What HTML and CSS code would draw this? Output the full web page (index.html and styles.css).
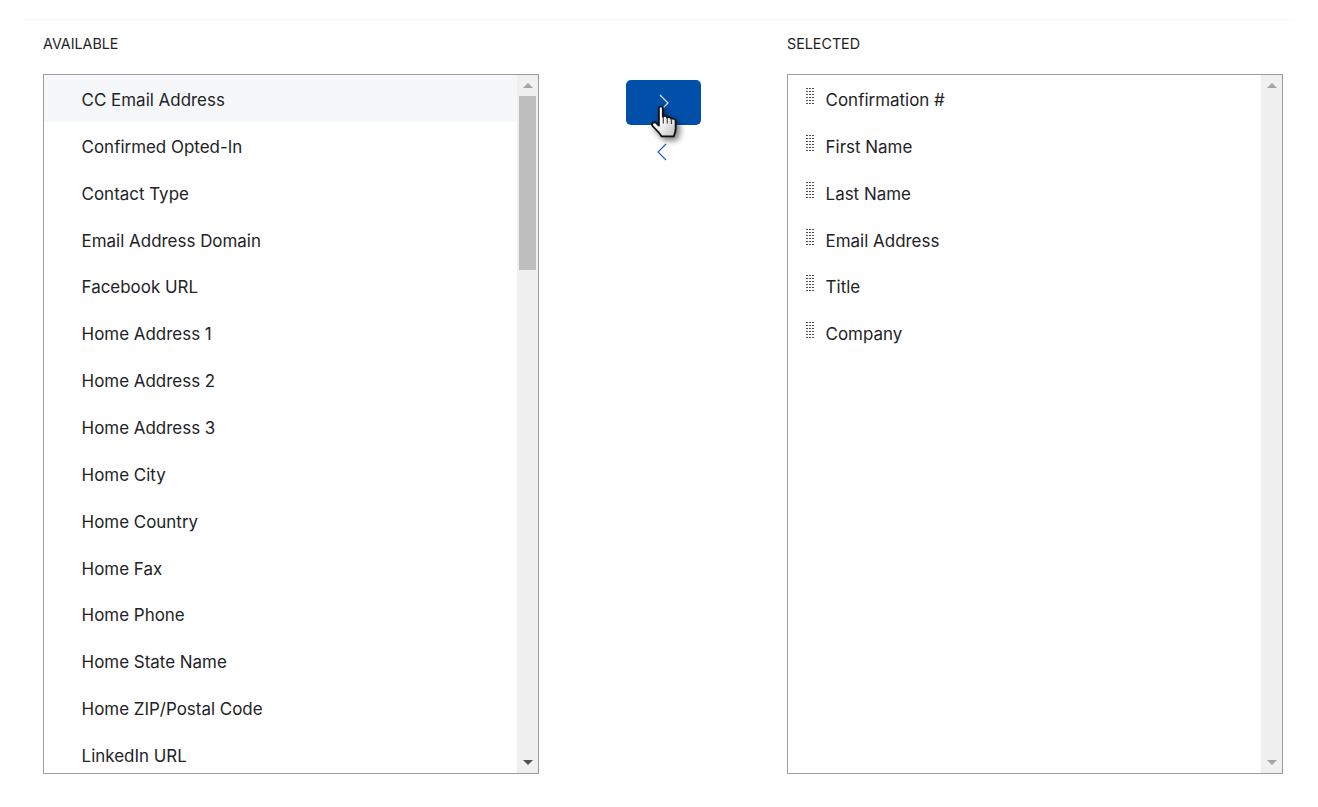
FILE: index.html
```html
<!DOCTYPE html>
<html lang="en">
<head>
<meta charset="utf-8">
<title>Columns</title>
<link rel="stylesheet" href="styles.css">
</head>
<body>
<div class="page">
  <div class="rule"></div>
  <div class="columns">
    <section class="col">
      <div class="label">AVAILABLE</div>
      <div class="box">
        <ul class="list">
          <li class="row row-active">CC Email Address</li>
          <li class="row">Confirmed Opted-In</li>
          <li class="row">Contact Type</li>
          <li class="row">Email Address Domain</li>
          <li class="row">Facebook URL</li>
          <li class="row">Home Address 1</li>
          <li class="row">Home Address 2</li>
          <li class="row">Home Address 3</li>
          <li class="row">Home City</li>
          <li class="row">Home Country</li>
          <li class="row">Home Fax</li>
          <li class="row">Home Phone</li>
          <li class="row">Home State Name</li>
          <li class="row">Home ZIP/Postal Code</li>
          <li class="row">LinkedIn URL</li>
        </ul>
        <div class="scrollbar">
          <span class="arrow arrow-up"></span>
          <span class="thumb"></span>
          <span class="arrow arrow-down arrow-dark"></span>
        </div>
      </div>
    </section>
    <div class="mid">
      <button class="move move-add" type="button">
        <svg class="chev" width="12" height="18" viewBox="0 0 12 18"><path d="M2 1l8 8-8 8" fill="none" stroke="#dbe6ff" stroke-width="1.2"/></svg>
      </button>
      <button class="move move-remove" type="button">
        <svg class="chev" width="12" height="18" viewBox="0 0 12 18"><path d="M10 1L2 9l8 8" fill="none" stroke="#2a5fd0" stroke-width="1.2"/></svg>
      </button>
      <svg class="cursor" width="31" height="37" viewBox="0 0 28 36" preserveAspectRatio="none">
        <defs>
          <linearGradient id="hand" x1="0" y1="0" x2="1" y2="1">
            <stop offset="0.4" stop-color="#ffffff"/>
            <stop offset="1" stop-color="#bdbdbd"/>
          </linearGradient>
        </defs>
        <path d="M8 20V3.2C8 .6 11.6 .6 11.6 3.2V11.5C12.6 10.3 15 10.3 15.4 12.3C16.4 11.3 18.8 11.5 19.2 13.6C20.4 12.8 23 13.2 23.2 15.6V23C23.2 26 22.4 28 21.4 30.6H10.4C9 27.5 6.2 24.6 2.6 20.8C.6 18.6 2.8 15.8 5.2 17.2Z" fill="url(#hand)" stroke="#111" stroke-width="1.7" stroke-linejoin="round"/>
        <path d="M12 12v6M15.6 13v5M19.3 14.5v4" fill="none" stroke="#333" stroke-width="1"/>
      </svg>
    </div>
    <section class="col">
      <div class="label">SELECTED</div>
      <div class="box">
        <ul class="list">
          <li class="row row-drag"><span class="grip"></span>Confirmation #</li>
          <li class="row row-drag"><span class="grip"></span>First Name</li>
          <li class="row row-drag"><span class="grip"></span>Last Name</li>
          <li class="row row-drag"><span class="grip"></span>Email Address</li>
          <li class="row row-drag"><span class="grip"></span>Title</li>
          <li class="row row-drag"><span class="grip"></span>Company</li>
        </ul>
        <div class="scrollbar">
          <span class="arrow arrow-up"></span>
          <span class="spacer"></span>
          <span class="arrow arrow-down"></span>
        </div>
      </div>
    </section>
  </div>
</div>
</body>
</html>
```
FILE: styles.css
```css
* { box-sizing: border-box; }
html, body { margin: 0; padding: 0; background: #fff; }
body {
  font-family: Inter, "Liberation Sans", sans-serif;
  color: #222226;
  overflow: hidden;
}
.page { width: 1318px; height: 807px; padding: 19px 23px 0 20px; }
.rule { height: 1px; background: #fafafa; }
.columns { display: flex; padding: 15px 0 0 23px; }
.col { width: 496px; flex: none; }
.label { height: 39px; font-size: 14.3px; line-height: 18px; }
.box {
  height: 700px;
  border: 1px solid #9b9ca3;
  display: flex;
  overflow: hidden;
}
.list { flex: 1; margin: 0; padding: 0; list-style: none; min-width: 0; }
.row {
  height: 46.86px;
  line-height: 50px;
  padding-left: 37.6px;
  font-size: 16.95px;
  white-space: nowrap;
}
.row-active { background: #f6f7f9; }
.row-drag { position: relative; }
.grip {
  position: absolute;
  left: 18px;
  top: 13px;
  width: 8px;
  height: 17px;
  background-image: linear-gradient(#4f4c4a 1px, transparent 1px);
  background-size: 100% 3px;
  -webkit-mask-image: linear-gradient(90deg, #000 2px, transparent 2px);
  -webkit-mask-size: 3px 100%;
  mask-image: linear-gradient(90deg, #000 2px, transparent 2px);
  mask-size: 3px 100%;
}
.scrollbar {
  width: 21px;
  flex: none;
  background: #f0f0f0;
  display: flex;
  flex-direction: column;
  align-items: center;
}
.arrow { width: 0; height: 0; flex: none; border-left: 5px solid transparent; border-right: 5px solid transparent; }
.arrow-up { border-bottom: 5px solid #a3a3a3; margin: 8px 0 8px; }
.arrow-down { border-top: 5px solid #a3a3a3; margin: auto 0 8px; }
.arrow-dark { border-top-color: #505050; }
.thumb { width: 17px; height: 174px; background: #bebebe; flex: none; }
.spacer { flex: 1; }
.mid {
  width: 248px;
  flex: none;
  position: relative;
  display: flex;
  flex-direction: column;
  align-items: center;
  padding-top: 45px;
}
.move { border: 0; padding: 0; display: flex; align-items: center; justify-content: center; background: none; }
.move-add { width: 75px; height: 45px; background: #0050aa; border-radius: 5px; margin-left: 1px; }
.move-remove { width: 75px; height: 18px; margin-top: 18px; margin-left: -3px; }
.cursor {
  position: absolute;
  left: 111px;
  top: 70px;
  filter: drop-shadow(3px 3px 3px rgba(0,0,0,.55));
}
```
